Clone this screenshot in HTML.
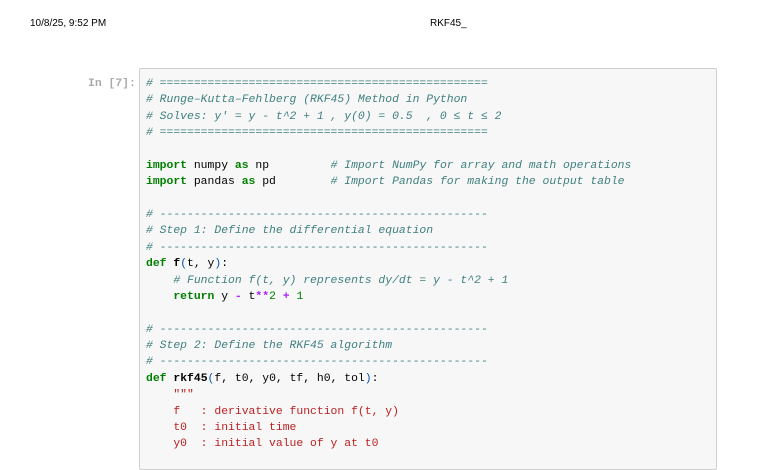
<!DOCTYPE html>
<html><head><meta charset="utf-8"><style>
body{margin:0;width:784px;height:441px;overflow:hidden;background:#fff;position:relative;font-family:"Liberation Sans",sans-serif}
.hd{position:absolute;top:18px;font-size:10px;color:#000}
.prompt{position:absolute;left:88px;top:76px;font:bold 11.4px/16.38px "Liberation Mono",monospace;color:#aaa}
.cell{position:absolute;left:139px;top:68px;width:576px;height:400px;background:#f7f7f7;border:1px solid #cfcfcf;border-radius:2px}
pre{position:absolute;left:146px;top:76px;margin:0;font:11.4px/16.38px "Liberation Mono",monospace;color:#000;white-space:pre}
.c{color:#408080;font-style:italic}
.k{color:#008000;font-weight:bold}
.o{color:#aa22ff;font-weight:bold}
.n{color:#008000}
.s{color:#ba2121}
.p{color:#0055aa}
</style></head><body>
<div class="hd" style="left:30px">10/8/25, 9:52 PM</div>
<div class="hd" style="left:430px">RKF45_</div>
<div class="prompt">In [7]:</div>
<div class="cell"></div>
<pre><span class="c"># ================================================</span>
<span class="c"># Runge–Kutta–Fehlberg (RKF45) Method in Python</span>
<span class="c"># Solves: y′ = y - t^2 + 1 , y(0) = 0.5  , 0 ≤ t ≤ 2</span>
<span class="c"># ================================================</span>

<span class="k">import</span> numpy <span class="k">as</span> np         <span class="c"># Import NumPy for array and math operations</span>
<span class="k">import</span> pandas <span class="k">as</span> pd        <span class="c"># Import Pandas for making the output table</span>

<span class="c"># ------------------------------------------------</span>
<span class="c"># Step 1: Define the differential equation</span>
<span class="c"># ------------------------------------------------</span>
<span class="k">def</span> <b>f</b><span class="p">(</span>t, y<span class="p">)</span>:
    <span class="c"># Function f(t, y) represents dy/dt = y - t^2 + 1</span>
    <span class="k">return</span> y <span class="o">-</span> t<span class="o">**</span><span class="n">2</span> <span class="o">+</span> <span class="n">1</span>

<span class="c"># ------------------------------------------------</span>
<span class="c"># Step 2: Define the RKF45 algorithm</span>
<span class="c"># ------------------------------------------------</span>
<span class="k">def</span> <b>rkf45</b><span class="p">(</span>f, t0, y0, tf, h0, tol<span class="p">)</span>:
    <span class="s">"""</span>
<span class="s">    f   : derivative function f(t, y)</span>
<span class="s">    t0  : initial time</span>
<span class="s">    y0  : initial value of y at t0</span>
</pre>
</body></html>
